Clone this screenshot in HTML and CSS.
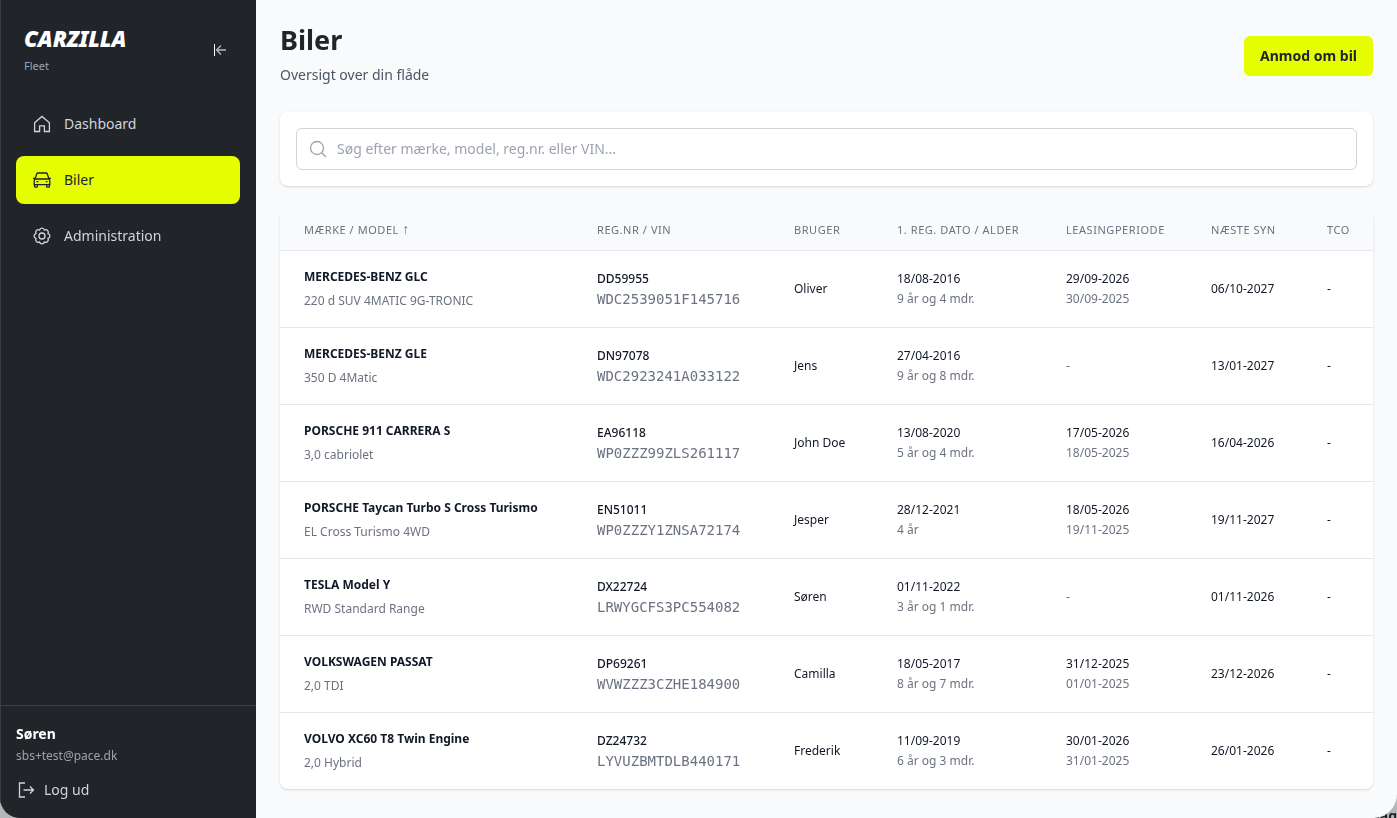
FILE: index.html
```
<!DOCTYPE html>
<html lang="da">
<head>
  <meta charset="UTF-8">
  <meta name="viewport" content="width=device-width, initial-scale=1.0">
  <title>Carzilla Fleet - Biler</title>
  <link rel="stylesheet" href="styles.css">
</head>
<body>
  <div class="backdrop-text" aria-hidden="true">sag</div>
  <div class="app">
    <aside class="sidebar">
      <div class="sidebar-header">
        <div>
          <div class="logo">CARZILLA</div>
          <div class="logo-sub">Fleet</div>
        </div>
        <button type="button" class="collapse-btn" aria-label="Skjul menu">
          <svg width="16" height="16" viewBox="0 0 16 16" fill="none" stroke="currentColor" stroke-width="1.300">
            <path d="M2.500 2v12" stroke="#fff" stroke-width="1"/>
            <path d="M14 8H4.500M9 3.500L4.500 8 9 12.500"/>
          </svg>
        </button>
      </div>

      <nav class="nav">
        <a href="#" class="nav-link">
          <svg width="20" height="20" viewBox="0 0 20 20" fill="none" stroke="currentColor" stroke-width="1.300">
            <path d="M2.600 8.800L10 2.400l7.400 6.400v8.700h-5v-5.600H7.600v5.600h-5z"/>
          </svg>
          <span>Dashboard</span>
        </a>
        <a href="#" class="nav-link active">
          <svg width="20" height="20" viewBox="0 0 20 20" fill="none" stroke="currentColor" stroke-width="1.300">
            <path d="M3 9l1.800-5.200c.2-.6.5-.8 1.100-.8h8.200c.6 0 .9.2 1.100.8L17 9M1 8.300h1.800M17.200 8.300H19M3 9h14c.5.600.8 1.300.8 2v3.600H2.200V11c0-.7.3-1.400.8-2zM2.600 14.600v1.900c0 .4.200.6.600.6h1.500c.4 0 .6-.2.600-.6v-1.900M14.700 14.600v1.900c0 .4.200.6.600.6h1.500c.4 0 .6-.2.600-.6v-1.900M4.500 11.600h1.800M13.700 11.600h1.800"/>
          </svg>
          <span>Biler</span>
        </a>
        <a href="#" class="nav-link">
          <svg width="20" height="20" viewBox="0 0 20 20" fill="none" stroke="currentColor" stroke-width="1.300">
            <path d="M7.550 4.090A2.500 2.500 0 0 1 12.450 4.090A2.500 2.500 0 0 1 15.910 7.550A2.500 2.500 0 0 1 15.910 12.450A2.500 2.500 0 0 1 12.450 15.910A2.500 2.500 0 0 1 7.550 15.910A2.500 2.500 0 0 1 4.090 12.450A2.500 2.500 0 0 1 4.090 7.550A2.500 2.500 0 0 1 7.550 4.090z" stroke-linejoin="round"/>
            <circle cx="10" cy="10" r="3"/>
          </svg>
          <span>Administration</span>
        </a>
      </nav>

      <div class="sidebar-footer">
        <div class="user-name">Søren</div>
        <div class="user-email">sbs+test@pace.dk</div>
        <button type="button" class="logout-btn">
          <svg width="20" height="20" viewBox="0 0 20 20" fill="none" stroke="currentColor" stroke-width="1.300">
            <path d="M9 3H3.500v14H9M7.500 10h10M14 6.500l3.500 3.500-3.500 3.500"/>
          </svg>
          <span>Log ud</span>
        </button>
      </div>
    </aside>

    <main class="content">
      <header class="page-header">
        <div>
          <h1>Biler</h1>
          <p>Oversigt over din flåde</p>
        </div>
        <button type="button" class="request-btn">Anmod om bil</button>
      </header>

      <section class="card search-card">
        <label class="search-box">
          <svg width="20" height="20" viewBox="0 0 20 20" fill="none" stroke="currentColor" stroke-width="1.300">
            <circle cx="8" cy="9" r="6.500"/>
            <path d="M12.700 13.700L17 18"/>
          </svg>
          <input type="text" aria-label="Søg" placeholder="Søg efter mærke, model, reg.nr. eller VIN...">
        </label>
      </section>

      <section class="card">
        <table class="car-table">
          <colgroup>
            <col>
            <col class="col-reg">
            <col class="col-user">
            <col class="col-date">
            <col class="col-lease">
            <col class="col-inspection">
            <col class="col-tco">
          </colgroup>
          <thead>
            <tr>
              <th>MÆRKE / MODEL <span class="sort">↑</span></th>
              <th>REG.NR / VIN</th>
              <th>BRUGER</th>
              <th>1. REG. DATO / ALDER</th>
              <th>LEASINGPERIODE</th>
              <th>NÆSTE SYN</th>
              <th>TCO</th>
            </tr>
          </thead>
          <tbody>
            <tr>
              <td><div class="car-name">MERCEDES-BENZ GLC</div><div class="muted">220 d SUV 4MATIC 9G-TRONIC</div></td>
              <td><div class="reg">DD59955</div><div class="vin">WDC2539051F145716</div></td>
              <td>Oliver</td>
              <td>18/08-2016<div class="muted">9 år og 4 mdr.</div></td>
              <td>29/09-2026<div class="muted">30/09-2025</div></td>
              <td>06/10-2027</td>
              <td>-</td>
            </tr>
            <tr>
              <td><div class="car-name">MERCEDES-BENZ GLE</div><div class="muted">350 D 4Matic</div></td>
              <td><div class="reg">DN97078</div><div class="vin">WDC2923241A033122</div></td>
              <td>Jens</td>
              <td>27/04-2016<div class="muted">9 år og 8 mdr.</div></td>
              <td><span class="muted">-</span></td>
              <td>13/01-2027</td>
              <td>-</td>
            </tr>
            <tr>
              <td><div class="car-name">PORSCHE 911 CARRERA S</div><div class="muted">3,0 cabriolet</div></td>
              <td><div class="reg">EA96118</div><div class="vin">WP0ZZZ99ZLS261117</div></td>
              <td>John Doe</td>
              <td>13/08-2020<div class="muted">5 år og 4 mdr.</div></td>
              <td>17/05-2026<div class="muted">18/05-2025</div></td>
              <td>16/04-2026</td>
              <td>-</td>
            </tr>
            <tr>
              <td><div class="car-name">PORSCHE Taycan Turbo S Cross Turismo</div><div class="muted">EL Cross Turismo 4WD</div></td>
              <td><div class="reg">EN51011</div><div class="vin">WP0ZZZY1ZNSA72174</div></td>
              <td>Jesper</td>
              <td>28/12-2021<div class="muted">4 år</div></td>
              <td>18/05-2026<div class="muted">19/11-2025</div></td>
              <td>19/11-2027</td>
              <td>-</td>
            </tr>
            <tr>
              <td><div class="car-name">TESLA Model Y</div><div class="muted">RWD Standard Range</div></td>
              <td><div class="reg">DX22724</div><div class="vin">LRWYGCFS3PC554082</div></td>
              <td>Søren</td>
              <td>01/11-2022<div class="muted">3 år og 1 mdr.</div></td>
              <td><span class="muted">-</span></td>
              <td>01/11-2026</td>
              <td>-</td>
            </tr>
            <tr>
              <td><div class="car-name">VOLKSWAGEN PASSAT</div><div class="muted">2,0 TDI</div></td>
              <td><div class="reg">DP69261</div><div class="vin">WVWZZZ3CZHE184900</div></td>
              <td>Camilla</td>
              <td>18/05-2017<div class="muted">8 år og 7 mdr.</div></td>
              <td>31/12-2025<div class="muted">01/01-2025</div></td>
              <td>23/12-2026</td>
              <td>-</td>
            </tr>
            <tr>
              <td><div class="car-name">VOLVO XC60 T8 Twin Engine</div><div class="muted">2,0 Hybrid</div></td>
              <td><div class="reg">DZ24732</div><div class="vin">LYVUZBMTDLB440171</div></td>
              <td>Frederik</td>
              <td>11/09-2019<div class="muted">6 år og 3 mdr.</div></td>
              <td>30/01-2026<div class="muted">31/01-2025</div></td>
              <td>26/01-2026</td>
              <td>-</td>
            </tr>
          </tbody>
        </table>
      </section>
    </main>
  </div>
</body>
</html>
```
FILE: styles.css
```
/* Base styles */
* {
  box-sizing: border-box;
}

body {
  margin: 0;
  background-color: #b5b6b8;
  color: #212529;
  font-family: "Noto Sans", sans-serif;
  font-size: 14px;
  line-height: 24px;
}

h1, p {
  margin: 0;
}

button, input {
  font-family: inherit;
  font-size: inherit;
  line-height: inherit;
}

button {
  border: none;
  cursor: pointer;
}

svg {
  flex-shrink: 0;
}

.app {
  position: relative;
  display: flex;
  min-height: 100vh;
  background-color: #f9fafb;
  border-radius: 0 0 24px 20px;
  overflow: hidden;
}

/* Shows behind the rounded corner of the app */
.backdrop-text {
  position: fixed;
  right: 0;
  bottom: 0;
  height: 12px;
  overflow: hidden;
  font-weight: 700;
  line-height: 20px;
}

/* Sidebar */
.sidebar {
  width: 256px;
  flex-shrink: 0;
  display: flex;
  flex-direction: column;
  background-color: #212529;
  border-left: 1px solid #3a3e42;
  color: #d1d5db;
}

.sidebar-header {
  display: flex;
  justify-content: space-between;
  align-items: center;
  padding: 22px 24px 22px 23px;
}

.logo {
  color: #fff;
  font-size: 22px;
  font-weight: 900;
  font-style: italic;
  line-height: 32px;
}

.logo-sub {
  color: #9ca3af;
  font-size: 11px;
}

.collapse-btn {
  display: flex;
  padding: 4px;
  background: none;
  color: #b4b9c0;
}

.nav {
  display: flex;
  flex-direction: column;
  gap: 8px;
  padding: 0 16px 0 15px;
}

.nav-link {
  display: flex;
  align-items: center;
  gap: 12px;
  height: 48px;
  padding: 0 16px;
  border-radius: 8px;
  color: #d1d5db;
  text-decoration: none;
}

.nav-link.active {
  background-color: #e5ff00;
  color: #212529;
}

.sidebar-footer {
  margin-top: auto;
  padding: 16px 16px 16px 15px;
  border-top: 1px solid #374151;
}

.user-name {
  color: #fff;
  font-weight: 700;
}

.user-email {
  color: #9ca3af;
  font-size: 12px;
  line-height: 20px;
}

.logout-btn {
  display: flex;
  align-items: center;
  gap: 8px;
  margin-top: 12px;
  padding: 0;
  background: none;
  color: #d1d5db;
}

/* Page content */
.content {
  flex: 1;
  display: flex;
  flex-direction: column;
  gap: 24px;
  padding: 24px;
}

.page-header {
  display: flex;
  justify-content: space-between;
  align-items: center;
}

.page-header h1 {
  font-size: 27px;
  line-height: 32px;
}

.page-header p {
  padding: 8px 0 2px;
  color: #4b5563;
  line-height: 22px;
}

.request-btn {
  padding: 8px 16px;
  border-radius: 6px;
  background-color: #e5ff00;
  color: #212529;
  font-weight: 700;
}

.card {
  background-color: #fff;
  border-radius: 8px;
  box-shadow: 0 1px 3px rgba(0, 0, 0, 0.1), 0 1px 2px rgba(0, 0, 0, 0.06);
  overflow: hidden;
}

.search-card {
  padding: 16px;
}

.search-box {
  display: flex;
  align-items: center;
  gap: 8px;
  height: 42px;
  padding: 0 12px;
  border: 1px solid #d1d5db;
  border-radius: 6px;
  color: #9ca3af;
}

.search-box input {
  flex: 1;
  padding: 0;
  border: none;
  outline: none;
  background: none;
  color: #212529;
}

.search-box input::placeholder {
  color: #9ca3af;
}

/* Car table */
.car-table {
  width: 100%;
  table-layout: fixed;
  border-collapse: separate;
  border-spacing: 0;
  color: #111827;
  font-size: 12px;
  line-height: 20px;
}

.col-reg {
  width: 197px;
}

.col-user {
  width: 103px;
}

.col-date {
  width: 169px;
}

.col-lease {
  width: 145px;
}

.col-inspection {
  width: 116px;
}

.col-tco {
  width: 70px;
}

.car-table th {
  height: 41px;
  padding: 0 0 0 24px;
  background-color: #f9fafb;
  border-bottom: 1px solid #e5e7eb;
  color: #6b7280;
  font-size: 11px;
  font-weight: 400;
  letter-spacing: 0.05em;
  text-align: left;
  white-space: nowrap;
}

.car-table td {
  padding: 16px 0 16px 24px;
  border-bottom: 1px solid #e5e7eb;
  white-space: nowrap;
}

.car-table tr:last-child td {
  border-bottom: none;
}

.sort {
  font-size: 14px;
  line-height: 1;
}

.car-name {
  margin-bottom: 4px;
  font-weight: 700;
}

.reg {
  font-weight: 500;
}

.muted {
  color: #6b7280;
}

.vin {
  color: #6b7280;
  font-family: "DejaVu Sans Mono", monospace;
  font-size: 14px;
}
```
